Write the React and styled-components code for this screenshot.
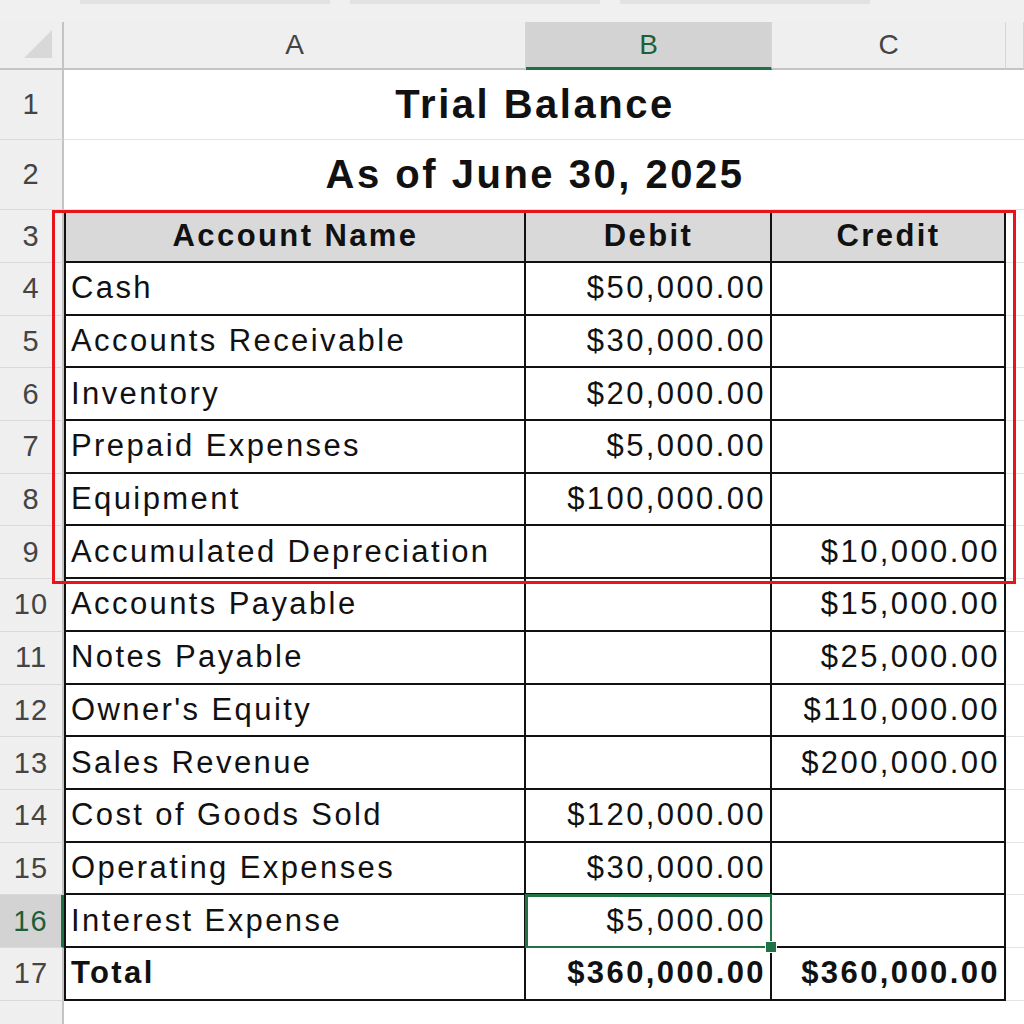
import React from "react";
import styled, { createGlobalStyle } from "styled-components";

const Global = createGlobalStyle`
  body { margin: 0; background: #fff; font-family: "Liberation Sans", Arial, sans-serif; }
`;

const cols = "64px 462px 246px 234px 18px";

const Page = styled.div`
  width: 1024px;
  height: 1024px;
  overflow: hidden;
  position: relative;
  background: #fff;
`;

const TopStrip = styled.div`
  height: 22px;
  background: #f0f0f0;
  display: flex;
  gap: 20px;
  padding: 0 0 0 80px;
  div { width: 250px; height: 4px; background: #e2e2e2; }
`;

const Row = styled.div`
  display: grid;
  grid-template-columns: ${cols};
  height: ${(p) => p.h}px;
`;

const ColHead = styled.div`
  background: ${(p) => (p.active ? "#d3d3d3" : "#efefef")};
  border-right: 1px solid #d6d6d6;
  border-bottom: ${(p) => (p.active ? "3px solid #1e7145" : "2px solid #c4c4c4")};
  color: ${(p) => (p.active ? "#1e5e3a" : "#444")};
  display: flex;
  align-items: center;
  justify-content: center;
  font-size: 28px;
`;

const Corner = styled.div`
  background: #efefef;
  border-right: 2px solid #c4c4c4;
  border-bottom: 2px solid #c4c4c4;
  position: relative;
  &::after {
    content: "";
    position: absolute;
    right: 10px;
    bottom: 10px;
    border-left: 28px solid transparent;
    border-bottom: 28px solid #d8d8d8;
  }
`;

const RowNum = styled.div`
  background: ${(p) => (p.active ? "#d3d3d3" : "#efefef")};
  color: ${(p) => (p.active ? "#1e5e3a" : "#444")};
  border-right: ${(p) => (p.active ? "3px solid #1e7145" : "2px solid #c4c4c4")};
  border-bottom: 1px solid #dadada;
  display: flex;
  align-items: center;
  justify-content: center;
  font-size: 29px;
  letter-spacing: 1px;
`;

const Title = styled.div`
  grid-column: 2 / 5;
  display: flex;
  align-items: center;
  justify-content: center;
  font-weight: bold;
  font-size: 40px;
  letter-spacing: 2.5px;
  color: #111;
  border-bottom: 1px solid #e4e4e4;
`;

const Cell = styled.div`
  border-right: 2px solid #111;
  border-bottom: 2px solid #111;
  ${(p) => p.first && "border-left: 2px solid #111;"}
  background: ${(p) => (p.head ? "#d9d9d9" : "#fff")};
  display: flex;
  align-items: center;
  justify-content: ${(p) => (p.head ? "center" : p.left ? "flex-start" : "flex-end")};
  padding: 0 4px 0 5px;
  font-size: 31px;
  letter-spacing: 2.4px;
  font-weight: ${(p) => (p.bold ? "bold" : "normal")};
  color: #111;
  white-space: nowrap;
  position: relative;
  ${(p) =>
    p.selected &&
    `outline: 3px solid #217346; outline-offset: -2px;
     &::after { content: ""; position: absolute; right: -7px; bottom: -7px; width: 10px; height: 10px; background: #217346; border: 1px solid #fff; z-index: 2; }`}
`;

const Blank = styled.div`
  border-bottom: 1px solid #e4e4e4;
`;

const RedBox = styled.div`
  position: absolute;
  left: 52px;
  top: 210px;
  width: 958px;
  height: 368px;
  border: 3px solid #e8141c;
  pointer-events: none;
`;

const rows = [
  ["Cash", "$50,000.00", ""],
  ["Accounts Receivable", "$30,000.00", ""],
  ["Inventory", "$20,000.00", ""],
  ["Prepaid Expenses", "$5,000.00", ""],
  ["Equipment", "$100,000.00", ""],
  ["Accumulated Depreciation", "", "$10,000.00"],
  ["Accounts Payable", "", "$15,000.00"],
  ["Notes Payable", "", "$25,000.00"],
  ["Owner's Equity", "", "$110,000.00"],
  ["Sales Revenue", "", "$200,000.00"],
  ["Cost of Goods Sold", "$120,000.00", ""],
  ["Operating Expenses", "$30,000.00", ""],
  ["Interest Expense", "$5,000.00", ""],
];

export default function App() {
  return (
    <Page>
      <Global />
      <TopStrip><div /><div /><div /></TopStrip>
      <Row h={48}>
        <Corner />
        <ColHead>A</ColHead>
        <ColHead active>B</ColHead>
        <ColHead>C</ColHead>
        <ColHead />
      </Row>
      <Row h={70}>
        <RowNum>1</RowNum>
        <Title>Trial Balance</Title>
        <Blank />
      </Row>
      <Row h={70}>
        <RowNum>2</RowNum>
        <Title>As of June 30, 2025</Title>
        <Blank />
      </Row>
      <Row h={53}>
        <RowNum>3</RowNum>
        <Cell head bold first>Account Name</Cell>
        <Cell head bold>Debit</Cell>
        <Cell head bold>Credit</Cell>
        <Blank />
      </Row>
      {rows.map((r, i) => (
        <Row h={52.7} key={i}>
          <RowNum active={i === 12}>{i + 4}</RowNum>
          <Cell left first>{r[0]}</Cell>
          <Cell selected={i === 12}>{r[1]}</Cell>
          <Cell>{r[2]}</Cell>
          <Blank />
        </Row>
      ))}
      <Row h={52.7}>
        <RowNum>17</RowNum>
        <Cell left first bold>Total</Cell>
        <Cell bold>$360,000.00</Cell>
        <Cell bold>$360,000.00</Cell>
        <Blank />
      </Row>
      <Row h={52}>
        <RowNum />
        <Blank /><Blank /><Blank /><Blank />
      </Row>
      <RedBox />
    </Page>
  );
}
